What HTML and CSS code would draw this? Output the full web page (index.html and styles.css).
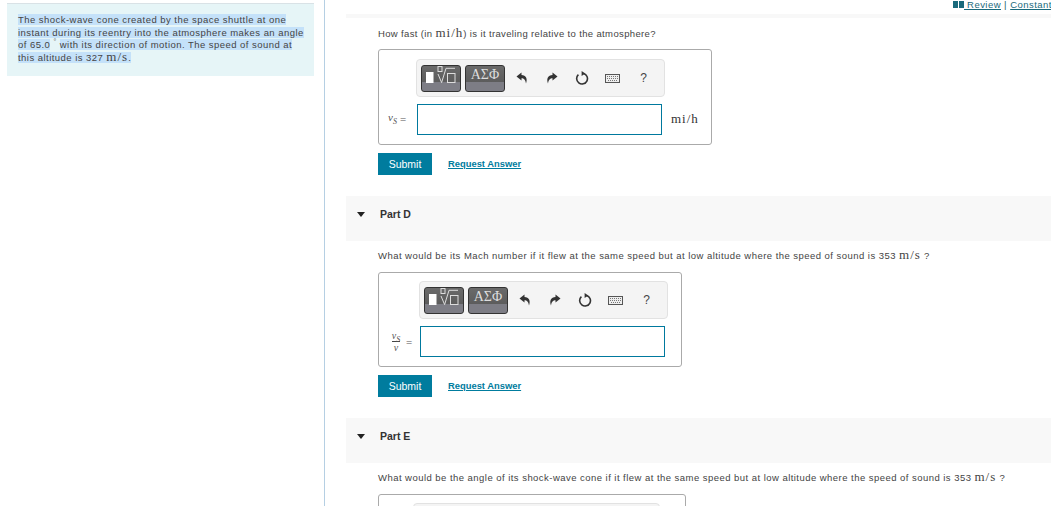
FILE: index.html
```html
<!DOCTYPE html>
<html lang="en">
<head>
    <meta charset="UTF-8">
    <title>Shock wave problem</title>
    <link rel="stylesheet" href="styles.css">
</head>
<body>
    <svg class="icon-defs" width="0" height="0">
        <symbol id="i-undo" viewBox="0 0 12 12"><path d="M5.5 0.5 L0.5 4.6 L5.5 8.6 V6.2 C8 6.2 9.4 7.6 10 11.5 C11.8 6.6 10 3 5.5 3 Z"/></symbol>
        <symbol id="i-redo" viewBox="0 0 12 12"><path d="M6.5 0.5 L11.5 4.6 L6.5 8.6 V6.2 C4 6.2 2.6 7.6 2 11.5 C0.2 6.6 2 3 6.5 3 Z"/></symbol>
        <symbol id="i-reset" viewBox="0 0 14 14"><path d="M8.6 2.4 A5.4 5.4 0 1 1 3.4 3.6" fill="none" stroke="#333" stroke-width="1.6"/><path d="M6.6 0 L10.2 2.6 L6.6 5 Z"/></symbol>
        <symbol id="i-keys" viewBox="0 0 15 9"><rect x="0.5" y="0.5" width="14" height="8" fill="#eee" stroke="#555"/><path d="M2 2.5h11M2 4.5h11M3 6.5h9" stroke="#777" stroke-width="1" stroke-dasharray="1 1"/></symbol>
        <symbol id="i-root" viewBox="0 0 40 27"><rect x="5" y="7" width="7.5" height="11" fill="#fff"/><rect x="17" y="1.5" width="4" height="5" fill="none" stroke="#ddd"/><path d="M17 9 L20.6 17.6 L25 3.3 H34" fill="none" stroke="#ddd"/><rect x="26.5" y="8.5" width="7.5" height="9" fill="none" stroke="#ddd"/></symbol>
    </svg>

    <div class="page">
        <aside class="sidebar">
            <div class="intro">
                <p><span class="sel">The shock-wave cone created by the space shuttle at one instant during its reentry into the atmosphere makes an angle of 65.0</span> <sup class="deg">&deg;</sup> <span class="sel">with its direction of motion. The speed of sound at this altitude is 327 <span class="math">m/s</span>.</span></p>
            </div>
        </aside>

        <main class="main">
            <div class="top-links"><span class="book"></span><a href="#">&nbsp;Review</a> | <a href="#">Constants</a></div>
            <div class="top-strip"></div>

            <section class="part part-c">
                <p class="question">How fast (in <span class="math">mi/h</span>) is it traveling relative to the atmosphere?</p>
                <div class="answer-box box-c">
                    <div class="toolbar">
                        <span class="tool-btn"><svg width="40" height="27"><use href="#i-root"/></svg></span>
                        <span class="tool-btn greek">&Alpha;&Sigma;&Phi;</span>
                        <span class="tool-icons">
                            <svg class="ico" width="12" height="12"><use href="#i-undo"/></svg>
                            <svg class="ico" width="12" height="12"><use href="#i-redo"/></svg>
                            <svg class="ico" width="14" height="14"><use href="#i-reset"/></svg>
                            <svg class="ico" width="15" height="9"><use href="#i-keys"/></svg>
                            <span class="help">?</span>
                        </span>
                    </div>
                    <div class="answer-row">
                        <span class="var"><i>v<sub>S</sub></i> =</span>
                        <input class="answer" type="text">
                        <span class="unit math">mi/h</span>
                    </div>
                </div>
                <div class="actions">
                    <button class="submit">Submit</button>
                    <a class="request" href="#">Request Answer</a>
                </div>
            </section>

            <section class="part">
                <h2 class="part-head"><span class="caret"></span>Part D</h2>
                <p class="question">What would be its Mach number if it flew at the same speed but at low altitude where the speed of sound is 353 <span class="math">m/s</span> ?</p>
                <div class="answer-box box-d">
                    <div class="toolbar">
                        <span class="tool-btn"><svg width="40" height="27"><use href="#i-root"/></svg></span>
                        <span class="tool-btn greek">&Alpha;&Sigma;&Phi;</span>
                        <span class="tool-icons">
                            <svg class="ico" width="12" height="12"><use href="#i-undo"/></svg>
                            <svg class="ico" width="12" height="12"><use href="#i-redo"/></svg>
                            <svg class="ico" width="14" height="14"><use href="#i-reset"/></svg>
                            <svg class="ico" width="15" height="9"><use href="#i-keys"/></svg>
                            <span class="help">?</span>
                        </span>
                    </div>
                    <div class="answer-row">
                        <span class="var var-frac"><span class="frac"><i class="num">v<sub>S</sub></i><i class="den">v</i></span> =</span>
                        <input class="answer" type="text">
                    </div>
                </div>
                <div class="actions">
                    <button class="submit">Submit</button>
                    <a class="request" href="#">Request Answer</a>
                </div>
            </section>

            <section class="part">
                <h2 class="part-head"><span class="caret"></span>Part E</h2>
                <p class="question">What would be the angle of its shock-wave cone if it flew at the same speed but at low altitude where the speed of sound is 353 <span class="math">m/s</span> ?</p>
                <div class="answer-box box-e">
                    <div class="toolbar"></div>
                </div>
            </section>
        </main>
    </div>
</body>
</html>
```

FILE: styles.css
```css
html, body {
    margin: 0;
    padding: 0;
    height: 100%;
    overflow: hidden;
    background: #fff;
}
body {
    font-family: 'Liberation Sans', Arial, sans-serif;
    font-size: 9.5px;
    letter-spacing: 0.46px;
    color: #444;
}
.icon-defs {
    position: absolute;
}
.page {
    display: flex;
    height: 506px;
    overflow: hidden;
}
.sidebar {
    flex: 0 0 325px;
    padding: 3px 10px 0 7px;
    box-sizing: border-box;
    border-right: 1px solid #b5cfe3;
}
.intro {
    background: #e6f5f7;
    border-top: 1px solid #d9e2e6;
    padding: 10px 8px 0 11px;
    height: 73px;
    box-sizing: border-box;
}
.intro p {
    margin: 0;
    line-height: 12.7px;
}
.sel {
    background: #c4e1f9;
}
.deg {
    font-size: 7px;
    line-height: 0;
    color: #666;
}
.math {
    font-family: 'Liberation Serif', serif;
    font-size: 13px;
    letter-spacing: 1px;
    line-height: 0;
}
.main {
    flex: 1;
    min-width: 0;
    margin-left: 21px;
    position: relative;
}
.top-links {
    position: absolute;
    top: -1px;
    left: 607px;
    width: 120px;
    white-space: nowrap;
    color: #1a5f6e;
    line-height: 11px;
}
.top-links a {
    color: #1a6a7c;
    text-decoration: underline;
}
.book {
    display: inline-block;
    width: 11px;
    height: 7px;
    background: linear-gradient(90deg, #1a6a7c 45%, #fff 45%, #fff 55%, #1a6a7c 55%);
}
.top-strip {
    height: 4px;
    margin-top: 14px;
    background: #f8f8f8;
}
.question {
    margin: 8px 0 0 32px;
    line-height: 14px;
}
.part-c .question {
    margin-top: 9px;
    letter-spacing: 0.36px;
}
.part-head {
    margin: 21px 0 0;
    height: 45px;
    box-sizing: border-box;
    padding-bottom: 9px;
    background: #f8f8f8;
    display: flex;
    align-items: center;
    font-size: 10.5px;
    font-weight: bold;
    letter-spacing: 0;
    color: #333;
}
.caret {
    width: 0;
    height: 0;
    border-left: 4px solid transparent;
    border-right: 4px solid transparent;
    border-top: 5px solid #222;
    margin: 0 15px 0 11px;
}
.answer-box {
    margin: 9px 0 0 32px;
    border: 1px solid #aaa;
    border-radius: 3px;
    box-sizing: border-box;
}
.box-c {
    width: 334px;
    height: 96px;
    margin-top: 8px;
    padding: 9px 0 0 37px;
}
.box-d {
    width: 304px;
    height: 95px;
    padding: 8px 0 0 40px;
}
.box-e {
    width: 308px;
    height: 30px;
    padding: 8px 0 0 34px;
}
.toolbar {
    display: flex;
    align-items: center;
    width: 249px;
    height: 38px;
    box-sizing: border-box;
    padding: 0 4px;
    background: #f4f4f4;
    border: 1px solid #e2e2e2;
    border-radius: 4px;
    gap: 4px;
}
.box-e .toolbar {
    width: 247px;
}
.tool-btn {
    display: flex;
    align-items: flex-start;
    justify-content: center;
    width: 40px;
    height: 27px;
    box-sizing: border-box;
    border: 1px solid #333;
    border-radius: 3px;
    background: linear-gradient(#6a6a6a 0, #5c5c5c 65%, #7d7d85 66%, #7d7d85 100%);
    color: #ddd;
    overflow: hidden;
}
.tool-btn svg {
    flex: none;
    margin: -1px;
}
.greek {
    font-family: 'Liberation Serif', serif;
    font-size: 14px;
    letter-spacing: 0;
    line-height: 17px;
}
.tool-icons {
    display: grid;
    grid-template-columns: repeat(5, 30px);
    justify-items: center;
    align-items: center;
    margin-left: -2px;
}
.ico {
    fill: #333;
}
.help {
    margin-left: 3px;
    font-size: 12px;
    letter-spacing: 0;
    color: #444;
}
.answer-row {
    display: flex;
    align-items: center;
    margin: 7px 0 0 -29px;
}
.box-d .answer-row {
    margin-left: -31px;
}
.var {
    display: flex;
    align-items: center;
    width: 30px;
    flex: none;
    box-sizing: border-box;
    padding: 0 0 2px 1px;
    gap: 3px;
    font-family: 'Liberation Serif', serif;
    font-size: 11px;
    letter-spacing: 0;
    color: #555;
}
.var sub {
    font-size: 8px;
}
.var-frac {
    width: 32px;
    padding-bottom: 0;
}
.frac {
    display: inline-flex;
    flex-direction: column;
    align-items: center;
    font-size: 10px;
    line-height: 11px;
    width: 14px;
}
.frac .num {
    border-bottom: 1px solid #444;
    white-space: nowrap;
}
.frac sub {
    line-height: 0;
}
.answer {
    width: 245px;
    height: 31px;
    box-sizing: border-box;
    border: 1px solid #00799e;
    background: #fff;
    padding: 0;
    margin: 0;
}
.unit {
    margin: 0 0 2px 9px;
    color: #333;
}
.actions {
    display: flex;
    align-items: center;
    margin: 8px 0 0 32px;
    gap: 16px;
}
.submit {
    width: 54px;
    height: 22px;
    border: 0;
    padding: 0;
    background: #007c9e;
    color: #fff;
    font-family: inherit;
    font-size: 10.5px;
    letter-spacing: 0;
}
.request {
    margin-bottom: 2px;
    color: #007c9e;
    font-size: 9.4px;
    font-weight: bold;
    letter-spacing: 0;
    text-decoration: underline;
}
```
